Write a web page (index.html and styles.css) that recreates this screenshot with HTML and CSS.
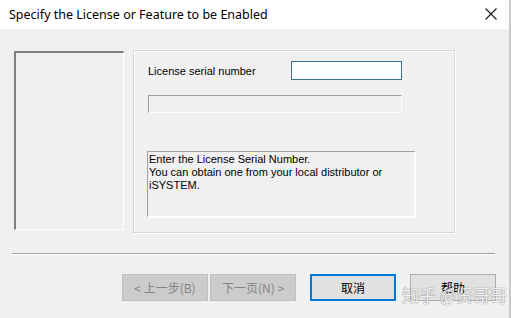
FILE: index.html
```html
<!DOCTYPE html>
<html>
<head>
<meta charset="utf-8">
<link rel="stylesheet" href="styles.css">
</head>
<body>
<div class="window">
  <div class="titlebar">
    <span class="title">Specify the License or Feature to be Enabled</span>
    <svg class="close" width="12" height="12" viewBox="0 0 12 12"><path d="M0.5 0.5 L11.5 11.5 M11.5 0.5 L0.5 11.5" stroke="#1a1a1a" stroke-width="1.1" fill="none"/></svg>
  </div>
  <div class="body">
    <div class="main">
      <div class="side-panel"></div>
      <div class="group">
        <div class="row-serial">
          <span class="label">License serial number</span>
          <div class="input"></div>
        </div>
        <div class="bar"></div>
        <div class="info">Enter the License Serial Number.<br>You can obtain one from your local distributor or<br>iSYSTEM.</div>
      </div>
    </div>
    <div class="separator"></div>
    <div class="buttons">
      <div class="btn disabled b1">&lt; 上一步(B)</div>
      <div class="btn disabled b2">下一页(N) &gt;</div>
      <div class="btn default b3">取消</div>
      <div class="btn b4">帮助</div>
    </div>
  </div>
  <div class="watermark">知乎 @贤哥哥</div>
</div>
</body>
</html>
```

FILE: styles.css
```css
html, body {
  margin: 0;
  padding: 0;
  background: #f0f0f0;
}
.window {
  position: relative;
  width: 511px;
  height: 318px;
  background: #f0f0f0;
  overflow: hidden;
  box-sizing: border-box;
  border-right: 2px solid #c8c8c8;
  font-family: "Liberation Sans", Arial, sans-serif;
}
.titlebar {
  height: 29px;
  background: #ffffff;
  display: flex;
  align-items: center;
  justify-content: space-between;
  padding: 0 12px 0 9px;
  box-sizing: border-box;
}
.title {
  font-family: "Noto Sans", sans-serif;
  font-size: 12.5px;
  color: #000;
  margin-top: -1px;
}
.close {
  margin-top: -2px;
}
.body {
  padding: 21px 0 0 14px;
}
.main {
  display: flex;
  align-items: flex-start;
}
.side-panel {
  width: 110px;
  height: 179px;
  margin-top: 1px;
  box-sizing: border-box;
  border-top: 2px solid #7f7f7f;
  border-left: 2px solid #7f7f7f;
  border-right: 1px solid #ffffff;
  border-bottom: 1px solid #ffffff;
}
.group {
  margin-left: 9px;
  width: 322px;
  height: 183px;
  box-sizing: border-box;
  border: 1px solid #d8d8d8;
  box-shadow: inset 1px 1px 0 #ffffff, 1px 1px 0 #ffffff;
  padding: 10px 0 0 14px;
}
.row-serial {
  display: flex;
  align-items: center;
  height: 19px;
}
.label {
  font-size: 11px;
  color: #000;
  width: 143px;
}
.input {
  width: 111px;
  height: 19px;
  box-sizing: border-box;
  border: 1px solid #3f6f8c;
  background: #fafeff;
}
.bar {
  margin-top: 15px;
  width: 254px;
  height: 18px;
  box-sizing: border-box;
  border-top: 1px solid #a0a0a0;
  border-left: 1px solid #a0a0a0;
  border-right: 1px solid #ffffff;
  border-bottom: 1px solid #ffffff;
}
.info {
  margin-top: 38px;
  margin-left: -1px;
  width: 269px;
  height: 67px;
  box-sizing: border-box;
  border-top: 1px solid #a0a0a0;
  border-left: 1px solid #a0a0a0;
  border-right: 2px solid #ffffff;
  border-bottom: 2px solid #ffffff;
  padding: 1px 0 0 1px;
  font-size: 11px;
  line-height: 13px;
  color: #000;
}
.separator {
  margin: 20px 0 0 -2px;
  width: 483px;
  height: 1px;
  background: #a0a0a0;
  border-bottom: 1px solid #ffffff;
}
.buttons {
  display: flex;
  margin: 19px 0 0 108px;
}
.btn {
  width: 86px;
  height: 27px;
  box-sizing: border-box;
  display: flex;
  align-items: center;
  justify-content: center;
  font-family: "Noto Sans CJK SC", sans-serif;
  font-size: 12px;
  color: #000;
  background: #e1e1e1;
  border: 1px solid #adadad;
}
.btn.disabled {
  background: #cccccc;
  border-color: #bfbfbf;
  color: #838383;
}
.b2 { margin-left: 2px; }
.b3 { margin-left: 14px; }
.b4 { margin-left: 14px; }
.btn.default {
  border: 2px solid #0078d7;
}
.watermark {
  position: absolute;
  left: 402px;
  top: 282px;
  font-family: "Noto Sans CJK SC", sans-serif;
  font-size: 17px;
  color: rgba(255, 255, 255, 0.9);
  text-shadow: 0 0 1px #8a8a8a, 0 0 1px #8a8a8a;
  white-space: nowrap;
}
```
